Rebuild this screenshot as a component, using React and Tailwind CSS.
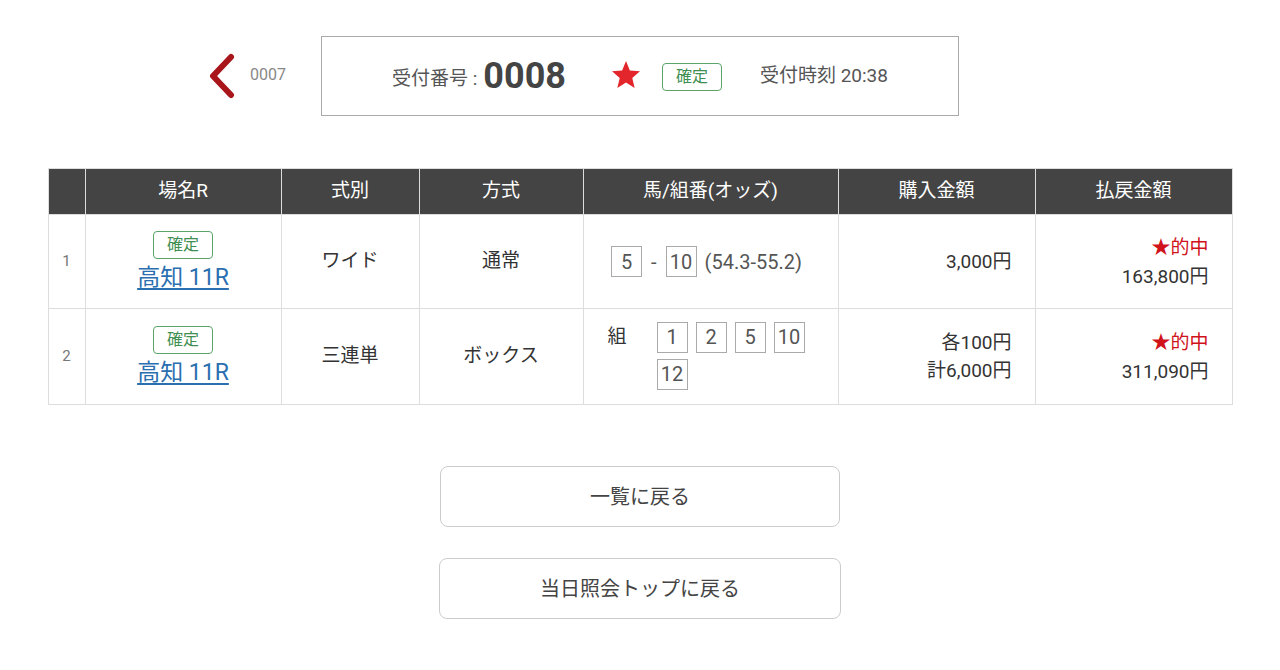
import React from "react";

const FONT = "font-['Roboto','Noto_Sans_CJK_JP',sans-serif]";

const rows = [
  {
    no: 1,
    place: "高知 11R",
    type: "ワイド",
    method: "通常",
    kind: "normal",
    horses: ["5", "10"],
    odds: "(54.3-55.2)",
    amount: ["3,000円"],
    payout: "163,800円",
    h: "h-[94px]",
  },
  {
    no: 2,
    place: "高知 11R",
    type: "三連単",
    method: "ボックス",
    kind: "box",
    horses: ["1", "2", "5", "10", "12"],
    amount: ["各100円", "計6,000円"],
    payout: "311,090円",
    h: "h-[96px]",
  },
];

function Badge() {
  return (
    <span className="inline-flex items-center justify-center w-[60px] h-[28px] border-[1.5px] border-[#5aa46a] rounded-[4px] text-[16px] text-[#3f8f52] leading-none">
      確定
    </span>
  );
}

function NumBox({ n }) {
  return (
    <span className="inline-flex items-center justify-center min-w-[31px] h-[31px] px-[2px] border border-[#aaa] text-[20px] text-[#555] leading-none">
      {n}
    </span>
  );
}

function Star({ size = 30 }) {
  return (
    <svg width={size} height={size} viewBox="0 0 24 24">
      <polygon
        points="12,1.5 14.9,8.6 22.5,9.2 16.7,14.2 18.5,21.7 12,17.6 5.5,21.7 7.3,14.2 1.5,9.2 9.1,8.6"
        fill="#e3262b"
      />
    </svg>
  );
}

function App() {
  return (
    <div className={`${FONT} w-[1280px] h-[670px] bg-white text-[#333] pt-[36px]`}>
      {/* receipt header */}
      <div className="grid grid-cols-[1fr_auto_1fr] items-center">
        <div className="flex items-center justify-end pr-[35px]">
          <svg width="32" height="46" viewBox="0 0 32 46" className="mr-[12px]">
            <polyline
              points="25,4 7,23 25,42"
              fill="none"
              stroke="#a8161c"
              strokeWidth="6"
              strokeLinecap="round"
              strokeLinejoin="round"
            />
          </svg>
          <span className="text-[16px] text-[#888] mt-[-2px]">0007</span>
        </div>
        <div className="w-[638px] h-[80px] border border-[#aaa] flex items-center justify-center">
          <span className="text-[19px] text-[#555] mt-[6px]">受付番号 :</span>
          <span className="text-[36px] font-bold text-[#444] ml-[6px]">0008</span>
          <span className="ml-[44px] mt-[-2px]">
            <Star size={32} />
          </span>
          <span className="ml-[20px] mt-[2px]">
            <Badge />
          </span>
          <span className="ml-[38px] text-[19px] text-[#555]">受付時刻 20:38</span>
        </div>
        <div />
      </div>

      {/* bet table */}
      <table className="mx-auto mt-[52px] w-[1184px] table-fixed border-collapse">
        <colgroup>
          <col className="w-[37px]" />
          <col className="w-[196px]" />
          <col className="w-[138px]" />
          <col className="w-[164px]" />
          <col className="w-[255px]" />
          <col className="w-[197px]" />
          <col className="w-[197px]" />
        </colgroup>
        <thead>
          <tr className="bg-[#444] text-white text-[19px] h-[46px]">
            <th className="border border-[#ddd] font-normal"></th>
            <th className="border border-[#ddd] font-normal">場名R</th>
            <th className="border border-[#ddd] font-normal">式別</th>
            <th className="border border-[#ddd] font-normal">方式</th>
            <th className="border border-[#ddd] font-normal">馬/組番(オッズ)</th>
            <th className="border border-[#ddd] font-normal">購入金額</th>
            <th className="border border-[#ddd] font-normal">払戻金額</th>
          </tr>
        </thead>
        <tbody>
          {rows.map((r) => (
            <tr key={r.no} className={`${r.h} text-[19px]`}>
              <td className="border border-[#ddd] text-center text-[15px] text-[#777]">{r.no}</td>
              <td className="border border-[#ddd] text-center">
                <div className="flex flex-col items-center">
                  <Badge />
                  <a className="mt-[4px] text-[23px] text-[#2a6fb0] underline underline-offset-[3px] leading-[30px] cursor-pointer">
                    {r.place}
                  </a>
                </div>
              </td>
              <td className="border border-[#ddd] text-center">{r.type}</td>
              <td className="border border-[#ddd] text-center">{r.method}</td>
              <td className="border border-[#ddd] align-middle">
                {r.kind === "normal" ? (
                  <div className="flex items-center justify-center gap-[9px] text-[#555] text-[20px] mr-[8px]">
                    <NumBox n={r.horses[0]} />
                    <span>-</span>
                    <NumBox n={r.horses[1]} />
                    <span className="ml-[-1px]">{r.odds}</span>
                  </div>
                ) : (
                  <div className="flex items-start pl-[24px] mt-[-2px]">
                    <span className="text-[19px] text-[#333] mt-[1px]">組</span>
                    <div className="ml-[30px] w-[160px] flex flex-wrap gap-x-[8px] gap-y-[6px]">
                      {r.horses.map((n) => (
                        <NumBox key={n} n={n} />
                      ))}
                    </div>
                  </div>
                )}
              </td>
              <td className="border border-[#ddd] text-right pr-[23px] leading-[28px]">
                {r.amount.map((a) => (
                  <div key={a}>{a}</div>
                ))}
              </td>
              <td className="border border-[#ddd] text-right pr-[23px] leading-[29px]">
                <div className="text-[#d0121b]">★的中</div>
                <div>{r.payout}</div>
              </td>
            </tr>
          ))}
        </tbody>
      </table>

      {/* buttons */}
      <div className="flex flex-col items-center mt-[61px] gap-[31px]">
        <button className="w-[400px] h-[61px] border-[1.5px] border-[#ccc] rounded-[8px] bg-white text-[20px] text-[#444]">
          一覧に戻る
        </button>
        <button className="w-[402px] h-[61px] border-[1.5px] border-[#ccc] rounded-[8px] bg-white text-[20px] text-[#444]">
          当日照会トップに戻る
        </button>
      </div>
    </div>
  );
}

export default App;
